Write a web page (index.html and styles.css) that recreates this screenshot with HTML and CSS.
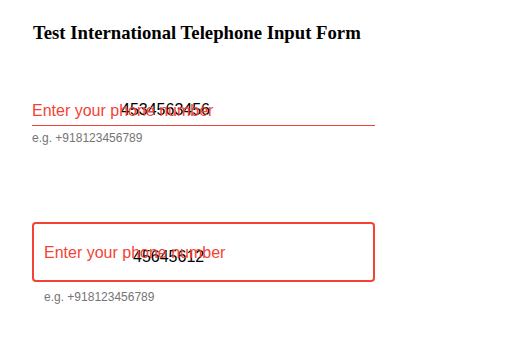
FILE: index.html
```html
<!DOCTYPE html>
<html>
<head>
<meta charset="utf-8">
<link rel="stylesheet" href="styles.css">
</head>
<body>
<div class="page">
  <h1 class="title">Test International Telephone Input Form</h1>
  <div class="group underline-group">
    <div class="field underline">
      <span class="value">4534563456</span>
      <span class="label">Enter your phone number</span>
    </div>
    <div class="hint">e.g. +918123456789</div>
  </div>
  <div class="group outline-group">
    <div class="field outline">
      <span class="value">45645612</span>
      <span class="label">Enter your phone number</span>
    </div>
    <div class="hint">e.g. +918123456789</div>
  </div>
</div>
</body>
</html>
```
FILE: styles.css
```css
html, body { margin: 0; padding: 0; background: #fff; }
.page {
  padding: 22px 0 0 32px;
  font-family: "Liberation Sans", Arial, sans-serif;
}
.title {
  font-family: "Liberation Serif", "Times New Roman", serif;
  font-size: 18.72px;
  font-weight: bold;
  margin: 0 0 0 1px;
  line-height: 22px;
  color: #000;
}
.group { width: 343px; }
.field { position: relative; }
.value {
  display: block;
  font-size: 16px;
  line-height: 18px;
  color: #000;
}
.label {
  position: absolute;
  font-size: 16px;
  line-height: 18px;
  color: #f44336;
  white-space: nowrap;
}
.hint {
  font-size: 12px;
  line-height: 14px;
  color: #757575;
}
.underline-group { margin-top: 56px; }
.underline {
  border-bottom: 1px solid #f44336;
  height: 25px;
}
.underline .value { padding: 1px 0 0 89px; }
.underline .label { left: 0; top: 2px; }
.underline-group .hint { margin-top: 5px; }
.outline-group { margin-top: 77px; }
.outline {
  border: 2px solid #f44336;
  border-radius: 4px;
  height: 56px;
}
.outline .value { padding: 24px 0 0 99px; }
.outline .label { left: 10px; top: 20px; }
.outline-group .hint { margin: 8px 0 0 12px; }
```
